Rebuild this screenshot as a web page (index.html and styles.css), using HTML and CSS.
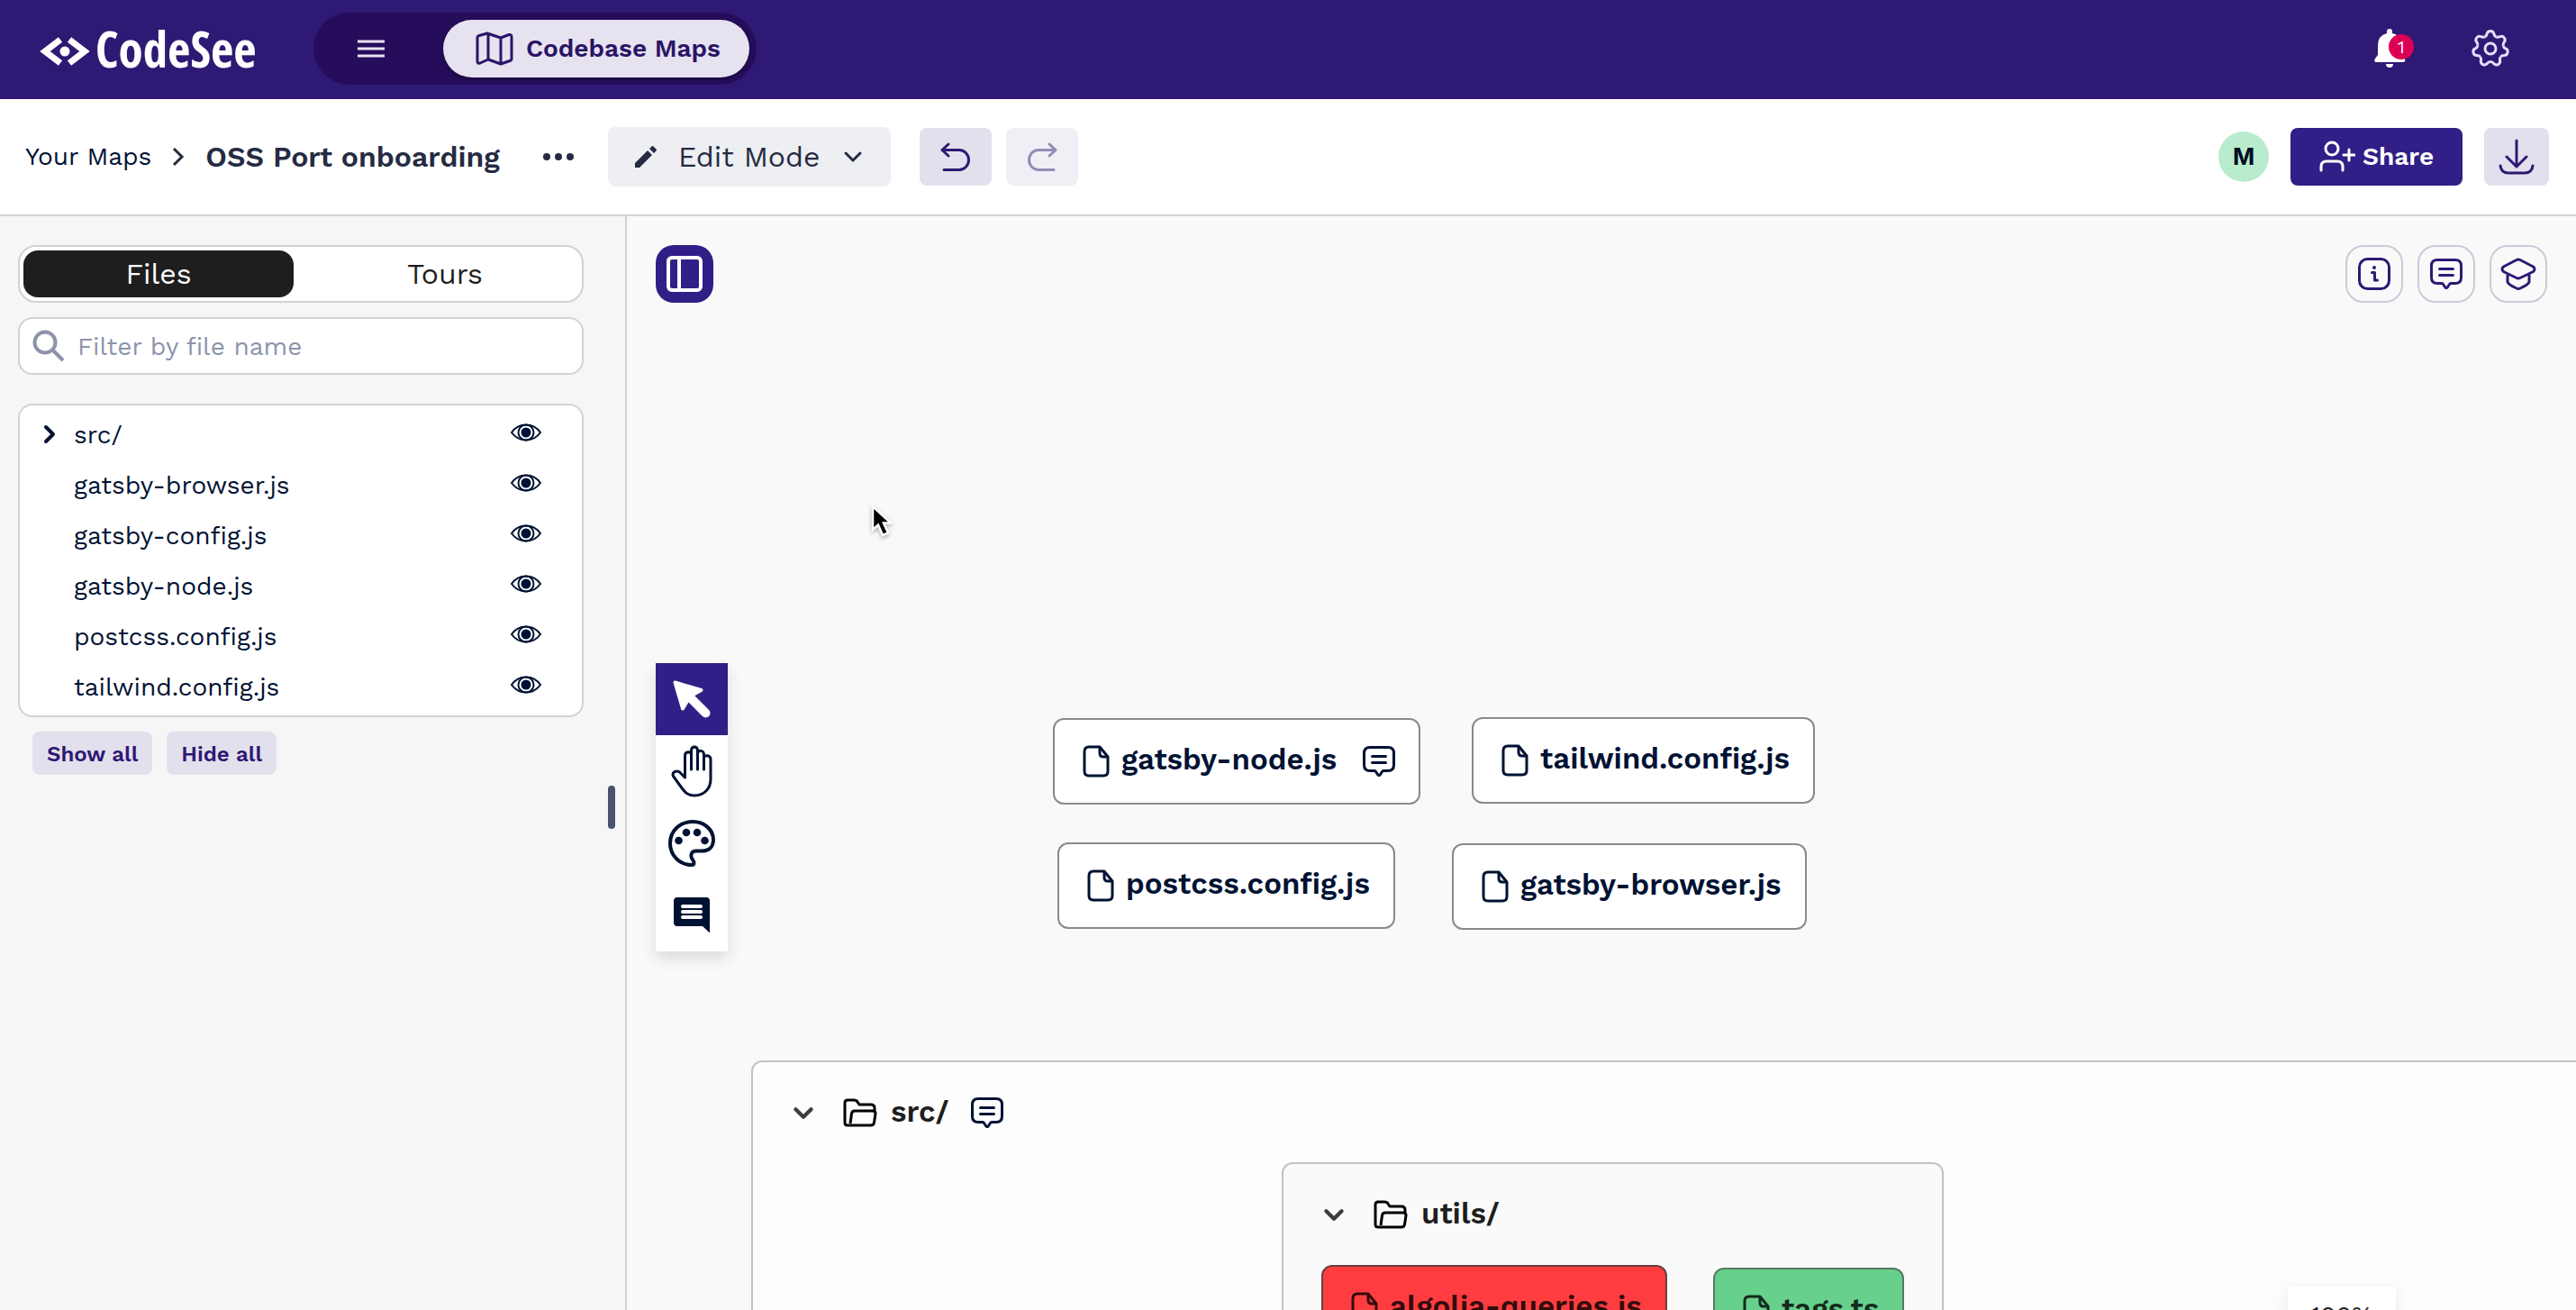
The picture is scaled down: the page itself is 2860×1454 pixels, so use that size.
FILE: index.html
```html
<!DOCTYPE html>
<html lang="en">
<head>
<meta charset="utf-8">
<meta name="viewport" content="width=device-width, initial-scale=1">
<title>OSS Port onboarding – CodeSee</title>
<link rel="stylesheet" href="styles.css">
</head>
<body>
<svg class="sprite" aria-hidden="true">
  <symbol id="i-file" viewBox="0 0 30 36">
    <path d="M7 2H19L28 13V29Q28 34 23 34H7Q2 34 2 29V7Q2 2 7 2Z"/>
    <path d="M19 2V9Q19 13 23 13H28"/>
  </symbol>
  <symbol id="i-comment" viewBox="0 0 36 34">
    <path d="M8 1.5H28Q34.5 1.500 34.500 8V21Q34.500 27.500 28 27.500H23Q22 27.500 21.500 28.500L19.200 32Q18 33.300 16.800 32L14.500 28.500Q14 27.500 13 27.500H8Q1.500 27.500 1.500 21V8Q1.500 1.500 8 1.500Z"/>
    <path d="M10.500 11.500H25.500M10.500 18.500H25.500"/>
  </symbol>
  <symbol id="i-folder" viewBox="0 0 38 32">
    <path d="M5 30Q2 30 2 27V5Q2 2 5 2H12Q15 2 16 4L18 7H31Q35 7 35 11V14M5 30H31Q34 30 34.500 27L36 17Q36 14 33 14H13Q10 14 9.500 17L8 28"/>
  </symbol>
  <symbol id="i-chevron" viewBox="0 0 22 14">
    <path d="M3 3L11 11L19 3"/>
  </symbol>
  <symbol id="i-eye" viewBox="0 0 36 20">
    <path d="M2 10Q8 1.500 18 1.500T34 10Q28 18.500 18 18.500T2 10Z"/>
    <ellipse cx="18" cy="10" rx="8.500" ry="8.500"/>
    <circle class="pupil" cx="18" cy="10" r="4.500"/>
  </symbol>
</svg>

<header class="topbar">
  <a class="logo" href="#" aria-label="CodeSee">
    <svg class="logo-mark" width="56" height="34" viewBox="0 0 56 34" aria-hidden="true">
      <path fill="none" stroke="#fff" stroke-width="7" d="M23 4L6 17L23 30M33 4L50 17L33 30"/>
      <circle cx="28" cy="17" r="5.500" fill="#fff"/>
    </svg>
    <span class="logo-text">CodeSee</span>
  </a>
  <nav class="switcher" aria-label="Main">
    <button class="menu-button" type="button" aria-label="Menu">
      <svg width="30" height="20" viewBox="0 0 30 20"><path d="M0 2H30M0 10H30M0 18H30"/></svg>
    </button>
    <a class="maps-link" href="#">
      <svg width="42" height="38" viewBox="0 0 42 38" aria-hidden="true"><path d="M2 7Q2 5 4 4.500L13 2L28 7L37 3.500Q40 3 40 6V30Q40 32 38 32.500L28 36L14 31L5 35Q2 36 2 33ZM14 2V31M28 7V36"/></svg>
      <span>Codebase Maps</span>
    </a>
  </nav>
  <div class="topbar-actions">
    <button class="bell" type="button" aria-label="Notifications">
      <svg width="36" height="44" viewBox="0 0 36 44">
        <path d="M17 0Q20 0 20 3V5Q31 7 31 19V29L34 33Q35 37 32 37H2Q-1 37 1 33L4 29V19Q4 7 14 5V3Q14 0 17 0ZM13 39H21Q21 43 17 43T13 39Z"/>
      </svg>
      <span class="badge">1</span>
    </button>
    <button class="gear" type="button" aria-label="Settings">
      <svg width="42" height="42" viewBox="-21 -21 42 42">
        <defs><path id="tooth" d="M-6.300 -13.100C-4.500 -14-4.200 -15-3.800 -16.500C-3.300 -18.800-2 -19.500 0 -19.500S3.300 -18.800 3.800 -16.500C4.200 -15 4.500 -14 6.300 -13.100"/></defs>
        <use href="#tooth"/><use href="#tooth" transform="rotate(51.430)"/><use href="#tooth" transform="rotate(102.860)"/><use href="#tooth" transform="rotate(154.290)"/><use href="#tooth" transform="rotate(205.710)"/><use href="#tooth" transform="rotate(257.140)"/><use href="#tooth" transform="rotate(308.570)"/>
        <circle r="6"/>
      </svg>
    </button>
  </div>
</header>

<div class="mapbar">
  <nav class="crumbs" aria-label="Breadcrumb">
    <a href="#">Your Maps</a>
    <svg width="14" height="22" viewBox="0 0 14 22" aria-hidden="true"><path d="M2 2L11 11L2 20"/></svg>
    <h1>OSS Port onboarding</h1>
  </nav>
  <button class="more" type="button" aria-label="More options">
    <svg width="34" height="10" viewBox="0 0 34 10"><circle cx="4" cy="5" r="4"/><circle cx="17" cy="5" r="4"/><circle cx="30" cy="5" r="4"/></svg>
  </button>
  <div class="mode">
    <svg class="mode-pencil" width="26" height="26" viewBox="0 0 26 26" aria-hidden="true"><path d="M1 20L15 6L20 11L6 25H1ZM17 4L19.500 1.500Q20.500 0.500 21.500 1.500L24.500 4.500Q25.500 5.500 24.500 6.500L22 9Z"/></svg>
    <select aria-label="Mode"><option>Edit Mode</option><option>View Mode</option></select>
    <svg class="mode-arrow" width="22" height="14" aria-hidden="true"><use href="#i-chevron"/></svg>
  </div>
  <div class="history">
    <button class="tint-button" type="button" aria-label="Undo">
      <svg width="36" height="34" viewBox="0 0 36 34"><path d="M10 3L3 9.500L10 16M3 9.500H22A10.500 11 0 0 1 22 31.500H5"/></svg>
    </button>
    <button class="tint-button" type="button" aria-label="Redo" disabled>
      <svg width="36" height="34" viewBox="0 0 36 34"><path d="M26 3L33 9.500L26 16M33 9.500H14A10.500 11 0 0 0 14 31.500H31"/></svg>
    </button>
  </div>
  <div class="mapbar-right">
    <span class="avatar">M</span>
    <button class="share" type="button">
      <svg width="40" height="36" viewBox="0 0 40 36" aria-hidden="true"><circle cx="14" cy="9" r="7"/><path d="M2 33V29Q2 23 8 23H20Q26 23 26 29V33M33 10V22M27 16H39"/></svg>
      <span>Share</span>
    </button>
    <button class="tint-button download" type="button" aria-label="Download">
      <svg width="40" height="40" viewBox="0 0 40 40"><path d="M20 2V31M9 20L20 31L31 20M2 30Q3 38 11 38H29Q37 38 38 30"/></svg>
    </button>
  </div>
</div>

<div class="workspace">
  <aside class="sidebar">
    <div class="tabs" role="tablist">
      <button type="button" role="tab" aria-selected="true">Files</button>
      <button type="button" role="tab" aria-selected="false">Tours</button>
    </div>
    <label class="filter">
      <svg width="36" height="36" viewBox="0 0 36 36" aria-hidden="true"><circle cx="14" cy="14" r="11.500"/><path d="M22 22L34 34"/></svg>
      <input type="text" placeholder="Filter by file name" aria-label="Filter by file name">
    </label>
    <ul class="files">
      <li><button class="expand" type="button" aria-label="Expand src"><svg width="14" height="22" viewBox="0 0 14 22"><path d="M3 3L11 11L3 19"/></svg></button><span>src/</span><button class="eye" type="button" aria-label="Hide src"><svg width="36" height="20"><use href="#i-eye"/></svg></button></li>
      <li><span>gatsby-browser.js</span><button class="eye" type="button" aria-label="Hide gatsby-browser.js"><svg width="36" height="20"><use href="#i-eye"/></svg></button></li>
      <li><span>gatsby-config.js</span><button class="eye" type="button" aria-label="Hide gatsby-config.js"><svg width="36" height="20"><use href="#i-eye"/></svg></button></li>
      <li><span>gatsby-node.js</span><button class="eye" type="button" aria-label="Hide gatsby-node.js"><svg width="36" height="20"><use href="#i-eye"/></svg></button></li>
      <li><span>postcss.config.js</span><button class="eye" type="button" aria-label="Hide postcss.config.js"><svg width="36" height="20"><use href="#i-eye"/></svg></button></li>
      <li><span>tailwind.config.js</span><button class="eye" type="button" aria-label="Hide tailwind.config.js"><svg width="36" height="20"><use href="#i-eye"/></svg></button></li>
    </ul>
    <div class="bulk">
      <button type="button">Show all</button>
      <button type="button">Hide all</button>
    </div>
    <div class="resize-handle"></div>
  </aside>

  <main class="canvas">
    <section class="group group-src">
      <div class="group-head">
        <svg class="chev" width="24" height="15"><use href="#i-chevron"/></svg>
        <svg class="folder" width="38" height="32"><use href="#i-folder"/></svg>
        <h2>src/</h2>
        <svg class="note" width="36" height="34"><use href="#i-comment"/></svg>
      </div>
    </section>
    <section class="group group-utils">
      <div class="group-head">
        <svg class="chev" width="24" height="15"><use href="#i-chevron"/></svg>
        <svg class="folder" width="38" height="32"><use href="#i-folder"/></svg>
        <h2>utils/</h2>
      </div>
    </section>
    <div class="node node-gatsby-node"><svg width="30" height="36"><use href="#i-file"/></svg><span>gatsby-node.js</span><svg class="note" width="36" height="34"><use href="#i-comment"/></svg></div>
    <div class="node node-tailwind"><svg width="30" height="36"><use href="#i-file"/></svg><span>tailwind.config.js</span></div>
    <div class="node node-postcss"><svg width="30" height="36"><use href="#i-file"/></svg><span>postcss.config.js</span></div>
    <div class="node node-gatsby-browser"><svg width="30" height="36"><use href="#i-file"/></svg><span>gatsby-browser.js</span></div>
    <div class="node node-algolia"><svg width="30" height="36"><use href="#i-file"/></svg><span>algolia-queries.js</span></div>
    <div class="node node-tags"><svg width="30" height="36"><use href="#i-file"/></svg><span>tags.ts</span></div>

    <div class="canvas-top">
      <button class="panel-toggle" type="button" aria-label="Toggle sidebar">
        <svg width="40" height="40" viewBox="0 0 40 40"><rect x="2" y="2" width="36" height="36" rx="4"/><path d="M14 2V38"/></svg>
      </button>
      <div class="canvas-actions">
        <button type="button" aria-label="Map info">
          <svg width="36" height="36" viewBox="0 0 36 36"><rect x="1.500" y="1.500" width="33" height="33" rx="9"/><path d="M15.500 16.500H18.500V25H21.500"/><circle class="dot" cx="18" cy="11" r="2"/></svg>
        </button>
        <button type="button" aria-label="Comments">
          <svg width="36" height="34"><use href="#i-comment"/></svg>
        </button>
        <button type="button" aria-label="Tours">
          <svg width="40" height="36" viewBox="0 0 40 36"><path d="M18 2.500Q20 1.500 22 2.500L36.500 10Q39.500 12.500 36.500 15.500L22 22.500Q20 23.500 18 22.500L3.500 15.500Q0.500 12.500 3.500 10ZM8 18V27Q9 30 18 34Q20 35 22 34Q31 30 32 27V18"/></svg>
        </button>
      </div>
    </div>

    <div class="tools" role="toolbar" aria-label="Canvas tools">
      <button class="tool-active" type="button" aria-label="Select">
        <svg width="44" height="44" viewBox="0 0 44 44"><path fill="#fff" stroke="#fff" stroke-width="4" stroke-linejoin="round" d="M3.500 3.500L32.500 12L20 19L12 32.500Z"/><path stroke="#fff" stroke-width="10" stroke-linecap="round" d="M18 18L37.500 37.500"/></svg>
      </button>
      <button type="button" aria-label="Pan">
        <svg width="46" height="58" viewBox="0 0 46 58"><path fill="none" stroke="currentColor" stroke-width="3" stroke-linejoin="round" stroke-linecap="round" d="M15.500 36L9.500 30C6 27.500 0.500 30 2.500 34.500L13 49Q18 56 26 56C37 56 44 48 44 38V16C44 10.500 36.500 10.500 36.500 14.500M15.500 36V12C15.500 6.500 22.500 6.500 22.500 11M22.500 27V6C22.500 0.500 29.500 0.500 29.500 6V27M29.500 10C29.500 5 36.500 5 36.500 11V27"/></svg>
      </button>
      <button type="button" aria-label="Colors">
        <svg width="52" height="52" viewBox="0 0 52 52"><path fill="none" stroke="currentColor" stroke-width="4" d="M26 50C12 50 2 39 2 26C2 12 13 2 27 2C40 2 50 11 50 22C50 31 44 34.500 37 34.500H31C26 34.500 25 38 25.500 41C26 44 28.500 45.500 28.500 47.500C28.500 49.300 27.500 50 26 50Z"/><g fill="currentColor"><circle cx="11.500" cy="23" r="4.300"/><circle cx="20" cy="14" r="4.300"/><circle cx="32" cy="14" r="4.300"/><circle cx="40.500" cy="23" r="4.300"/></g></svg>
      </button>
      <button type="button" aria-label="Add comment">
        <svg width="40" height="40" viewBox="0 0 40 40"><path fill="currentColor" d="M4 0H36Q40 0 40 4V39.500L32 32H4Q0 32 0 28V4Q0 0 4 0Z"/><path stroke="#fff" stroke-width="4" stroke-linecap="round" d="M10 10H30M10 16H30M10 22H30"/></svg>
      </button>
    </div>

    <output class="zoom-level">100%</output>

    <svg class="pointer" width="30" height="42" viewBox="0 0 30 42" aria-hidden="true"><path fill="#000" stroke="#fff" stroke-width="2.500" d="M3 3V29L9 23.500L14 35L20 32.500L15 21.500H23Z"/></svg>
  </main>
</div>
</body>
</html>
```
FILE: styles.css
```css
* {
  box-sizing: border-box;
}

body {
  margin: 0;
  height: 100vh;
  display: flex;
  flex-direction: column;
  overflow: hidden;
  background: #fff;
  color: #001233;
  font-family: "Work Sans", "Noto Sans", sans-serif;
  font-size: 28px;
  line-height: 36px;
}

button {
  border: 0;
  padding: 0;
  background: none;
  color: inherit;
  font: inherit;
  cursor: pointer;
  display: flex;
  align-items: center;
  justify-content: center;
}

a {
  color: inherit;
  text-decoration: none;
}

svg {
  display: block;
  flex: none;
}

.sprite {
  position: absolute;
  width: 0;
  height: 0;
}

/* Top bar */

.topbar {
  flex: none;
  display: flex;
  align-items: center;
  height: 110px;
  padding: 0 74px 2px 44px;
  background: #2e1974;
  color: #fff;
}

.logo {
  display: flex;
  align-items: center;
  gap: 6px;
}

.logo-mark {
  margin-top: 6px;
}

.logo-text {
  width: 178px;
  font-family: "Open Sans Condensed", "Noto Sans Condensed", "Lato", sans-serif;
  font-weight: 700;
  font-size: 55px;
  line-height: 62px;
}

.switcher {
  display: flex;
  align-items: center;
  justify-content: space-between;
  width: 492px;
  height: 80px;
  margin-left: 64px;
  padding: 0 8px 0 49px;
  border-radius: 40px;
  background: #250d5c;
}

.menu-button svg {
  stroke: #e6e2f0;
  stroke-width: 3;
}

.maps-link {
  display: flex;
  align-items: center;
  gap: 14px;
  height: 64px;
  padding: 0 32px 0 36px;
  border-radius: 32px;
  background: #e6e2f0;
  color: #2a1465;
  font-weight: 600;
  box-shadow: 0 2px 4px rgba(0, 0, 0, 0.4);
}

.maps-link svg {
  fill: none;
  stroke: currentColor;
  stroke-width: 3;
  stroke-linejoin: round;
}

.topbar-actions {
  display: flex;
  align-items: center;
  gap: 62px;
  margin-left: auto;
}

.bell {
  position: relative;
  width: 46px;
  justify-content: flex-start;
}

.bell svg {
  fill: #fff;
}

.badge {
  position: absolute;
  top: 6px;
  right: 2px;
  width: 28px;
  height: 28px;
  border-radius: 14px;
  background: #dc0055;
  font-size: 20px;
  line-height: 28px;
}

.gear svg {
  fill: none;
  stroke: #e6dcff;
  stroke-width: 3;
}

/* Map bar */

.mapbar {
  flex: none;
  display: flex;
  align-items: center;
  height: 130px;
  padding: 0 30px 0 28px;
  border-bottom: 2px solid #d2d2d2;
}

.crumbs {
  display: flex;
  align-items: center;
  gap: 23px;
}

.crumbs svg {
  fill: none;
  stroke: #252b42;
  stroke-width: 3;
}

.crumbs h1 {
  margin: 0;
  color: #252b42;
  font-size: 32px;
  font-weight: 600;
  line-height: 36px;
}

.more {
  margin-left: 48px;
  fill: #252b42;
}

.mode {
  display: grid;
  align-items: center;
  width: 314px;
  height: 66px;
  margin-left: 38px;
  color: #252b42;
}

.mode > * {
  grid-area: 1 / 1;
}

.mode select {
  appearance: none;
  width: 100%;
  height: 100%;
  padding: 0 80px 0 78px;
  border: 0;
  border-radius: 8px;
  background: #edeff3;
  color: inherit;
  font: inherit;
  font-size: 32px;
}

.mode svg {
  z-index: 1;
  pointer-events: none;
}

.mode-pencil {
  margin-left: 29px;
  fill: currentColor;
}

.mode-arrow {
  justify-self: end;
  margin-right: 31px;
}

.mode-arrow,
.chev {
  fill: none;
  stroke: currentColor;
  stroke-width: 3;
  stroke-linecap: round;
  stroke-linejoin: round;
}

.history {
  display: flex;
  gap: 16px;
  margin-left: 32px;
}

.tint-button {
  width: 80px;
  height: 64px;
  border-radius: 8px;
  background: #e3e0ed;
  color: #2e1974;
}

.tint-button svg {
  fill: none;
  stroke: currentColor;
  stroke-width: 3;
  stroke-linecap: round;
  stroke-linejoin: round;
}

.tint-button:disabled {
  opacity: 0.5;
}

.mapbar-right {
  display: flex;
  align-items: center;
  gap: 24px;
  margin-left: auto;
}

.avatar {
  width: 56px;
  height: 56px;
  border-radius: 28px;
  background: #b9ebcf;
  color: #000c1f;
  font-family: "Inter", sans-serif;
  font-size: 26px;
  font-weight: 700;
  line-height: 56px;
  text-align: center;
}

.share {
  gap: 8px;
  width: 191px;
  height: 64px;
  border-radius: 8px;
  background: #321e87;
  color: #fff;
  font-weight: 600;
}

.share svg {
  fill: none;
  stroke: currentColor;
  stroke-width: 3;
  stroke-linecap: round;
}

.download {
  width: 72px;
}

/* Sidebar */

.workspace {
  flex: 1;
  min-height: 0;
  display: flex;
}

.sidebar {
  position: relative;
  flex: none;
  width: 696px;
  padding: 32px 46px 0 20px;
  border-right: 2px solid #d2d2d2;
  background: #f6f6f6;
}

.tabs {
  display: flex;
  gap: 16px;
  height: 64px;
  padding: 4px 0 4px 4px;
  border: 2px solid #d2d2d2;
  border-radius: 20px;
  background: #fff;
}

.tabs button {
  flex: 1 1 0;
  border-radius: 16px;
  color: #1e1e1e;
  font-size: 32px;
}

.tabs button:first-child {
  flex-grow: 0;
  flex-basis: 300px;
}

.tabs [aria-selected="true"] {
  background: #1e1e1e;
  color: #fff;
}

.filter {
  display: flex;
  align-items: center;
  gap: 14px;
  height: 64px;
  margin-top: 16px;
  padding: 0 14px;
  border: 2px solid #d2d2d2;
  border-radius: 16px;
  background: #fff;
}

.filter svg {
  fill: none;
  stroke: #8c93ab;
  stroke-width: 4;
}

.filter input {
  flex: 1;
  min-width: 0;
  padding: 2px 0 0;
  border: 0;
  outline: 0;
  background: none;
  font: inherit;
}

.filter input::placeholder {
  color: #8c93ab;
  opacity: 1;
}

.files {
  margin: 32px 0 0;
  padding: 4px 44px 4px 60px;
  border: 2px solid #d2d2d2;
  border-radius: 16px;
  background: #fff;
  list-style: none;
}

.files li {
  display: flex;
  align-items: center;
  justify-content: space-between;
  height: 56px;
}

.files span {
  padding-top: 2px;
}

.expand {
  width: 34px;
  margin-left: -34px;
  justify-content: flex-start;
}

.expand + span {
  flex: 1;
}

.expand svg {
  fill: none;
  stroke: currentColor;
  stroke-width: 4;
  stroke-linecap: round;
  stroke-linejoin: round;
}

.eye {
  height: 52px;
  align-self: flex-start;
}

.eye svg {
  fill: none;
  stroke: currentColor;
  stroke-width: 2;
}

.pupil {
  fill: #001233;
}

.bulk {
  display: flex;
  gap: 16px;
  margin-top: 16px;
  padding-left: 16px;
}

.bulk button {
  height: 48px;
  padding: 2px 16px 0;
  border-radius: 8px;
  background: #e3e0ed;
  color: #2e1974;
  font-size: 24px;
  font-weight: 600;
}

.resize-handle {
  position: absolute;
  top: 632px;
  right: 11px;
  width: 8px;
  height: 48px;
  border-radius: 4px;
  background: #4a5270;
  cursor: col-resize;
}

/* Canvas */

.canvas {
  position: relative;
  flex: 1;
  min-width: 0;
  overflow: hidden;
  background: #f9f9f9;
}

.canvas-top {
  display: flex;
  justify-content: space-between;
  padding: 32px;
}

.panel-toggle {
  width: 64px;
  height: 64px;
  border-radius: 20px;
  background: #321e87;
}

.panel-toggle svg {
  fill: none;
  stroke: #fff;
  stroke-width: 4;
}

.canvas-actions {
  display: flex;
  gap: 16px;
}

.canvas-actions button {
  width: 64px;
  height: 64px;
  border: 2px solid #c8ccda;
  border-radius: 20px;
  color: #2e1974;
}

.canvas-actions svg,
.note {
  fill: none;
  stroke: currentColor;
  stroke-width: 3;
  stroke-linecap: round;
  stroke-linejoin: round;
}

.canvas-actions .dot {
  fill: currentColor;
  stroke: none;
}

.tools {
  position: absolute;
  left: 32px;
  top: 496px;
  background: #fff;
  box-shadow: 0 8px 16px rgba(0, 0, 0, 0.12);
}

.tools button {
  width: 80px;
  height: 80px;
}

.tools .tool-active {
  background: #321e87;
}

.node {
  position: absolute;
  display: flex;
  align-items: center;
  gap: 13px;
  height: 96px;
  padding: 0 26px 0 31px;
  border: 2px solid #8a8a8a;
  border-radius: 12px;
  background: #fff;
  font-size: 33px;
  font-weight: 600;
  white-space: nowrap;
}

.node span {
  padding-bottom: 4px;
}

.node svg {
  fill: none;
  stroke: currentColor;
  stroke-width: 3;
  stroke-linejoin: round;
}

.node .note {
  margin-left: 16px;
}

.node-gatsby-node {
  left: 473px;
  top: 557px;
}

.node-tailwind {
  left: 938px;
  top: 556px;
}

.node-postcss {
  left: 478px;
  top: 695px;
}

.node-gatsby-browser {
  left: 916px;
  top: 696px;
}

.node-algolia {
  left: 771px;
  top: 1164px;
  border-color: #6b4040;
  background: #ff3d40;
  color: #330c0d;
}

.node-tags {
  left: 1206px;
  top: 1167px;
  border-color: #557a64;
  background: #66d08c;
  color: #142a1c;
}

.group {
  position: absolute;
  border: 2px solid #c3c3c3;
  border-radius: 12px;
  color: #1e1e1e;
}

.group-src {
  left: 138px;
  top: 937px;
  width: 2400px;
  height: 1200px;
  background: #fdfdfd;
}

.group-utils {
  left: 727px;
  top: 1050px;
  width: 735px;
  height: 600px;
  background: #fafafa;
}

.group-head {
  display: flex;
  align-items: center;
  padding: 37px 44px;
}

.group-head h2 {
  margin: 0 24px 0 15px;
  padding-bottom: 2px;
  font-size: 33px;
  font-weight: 600;
  line-height: 36px;
}

.group-head .folder {
  margin-left: 32px;
  fill: none;
  stroke: #000;
  stroke-width: 3;
  stroke-linejoin: round;
}

.group-head .chev {
  color: #3c3c3c;
  stroke-width: 4;
}

.group-head .note {
  color: #001233;
}

.zoom-level {
  position: absolute;
  right: 200px;
  top: 1188px;
  width: 120px;
  height: 64px;
  background: #fff;
  color: #1e1e1e;
  line-height: 64px;
  text-align: center;
  box-shadow: 0 4px 16px rgba(0, 0, 0, 0.08);
}

.pointer {
  position: absolute;
  left: 270px;
  top: 319px;
  filter: drop-shadow(0 2px 2px rgba(0, 0, 0, 0.3));
}
```
